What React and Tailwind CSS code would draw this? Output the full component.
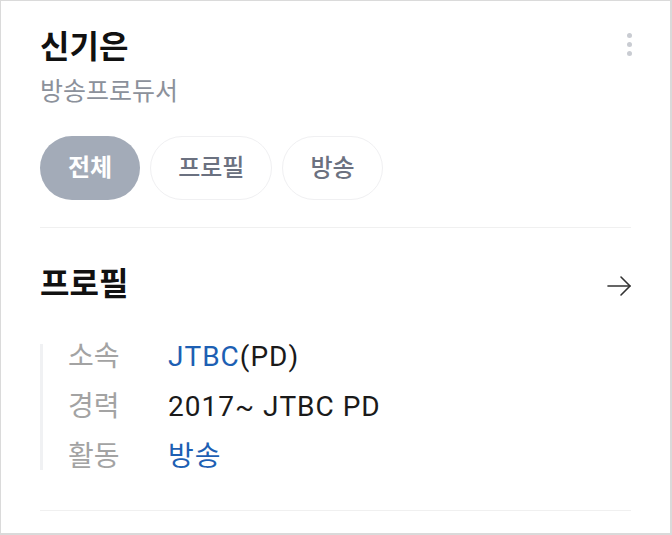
import React from "react";

const rows = [
  { label: "소속", value: (<><span className="text-[#1d5fb3]">JTBC</span>(PD)</>) },
  { label: "경력", value: "2017~ JTBC PD" },
  { label: "활동", value: <span className="text-[#1d5fb3]">방송</span> },
];

const tabs = [
  { name: "전체", active: true },
  { name: "프로필" },
  { name: "방송" },
];

export default function App() {
  return (
    <div
      className="w-[672px] h-[535px] bg-white border border-r-2 border-b-2 border-[#dadada] px-[39px] overflow-hidden"
      style={{ fontFamily: 'Roboto, "Noto Sans CJK KR", sans-serif' }}
    >
      {/* header */}
      <div className="flex justify-between pt-[26px]">
        <div>
          <h1 className="text-[32px] leading-[40px] font-bold text-[#111]">신기은</h1>
          <p className="mt-[9px] text-[25px] leading-[32px] text-[#8c919b]">방송프로듀서</p>
        </div>
        <div className="flex flex-col gap-[4px] pt-[6px] -mr-[1px]">
          <span className="w-[5px] h-[5px] rounded-full bg-[#c9ccd2]" />
          <span className="w-[5px] h-[5px] rounded-full bg-[#c9ccd2]" />
          <span className="w-[5px] h-[5px] rounded-full bg-[#c9ccd2]" />
        </div>
      </div>

      {/* tabs */}
      <div className="flex gap-[10px] mt-[28px]">
        {tabs.map((t) =>
          t.active ? (
            <button key={t.name} className="h-[64px] px-[28px] rounded-full bg-[#a3abb8] text-white text-[24px] font-bold">
              {t.name}
            </button>
          ) : (
            <button key={t.name} className="h-[64px] px-[27px] rounded-full border border-[#f0f0f2] bg-white text-[#6b7180] text-[24px] font-medium">
              {t.name}
            </button>
          )
        )}
      </div>

      <div className="mt-[27px] h-px bg-[#f0f0f0]" />

      {/* profile section */}
      <div className="flex items-center justify-between mt-[36px]">
        <h2 className="text-[32px] leading-[40px] font-bold text-[#111]">프로필</h2>
        <svg width="28" height="28" viewBox="0 0 28 28" fill="none" stroke="#333" strokeWidth="1.6" strokeLinecap="round" strokeLinejoin="round" className="-mr-[2px] mt-[4px]">
          <path d="M3 14h22" />
          <path d="M16 5l9 9-9 9" />
        </svg>
      </div>

      <div className="mt-[40px] border-l-[3px] border-[#f0f1f3] pl-[25px] flex flex-col gap-[24px]">
        {rows.map((r) => (
          <div key={r.label} className="flex text-[28px] leading-[26px]">
            <span className="w-[100px] text-[#a3a3a3]">{r.label}</span>
            <span className="text-[#1a1a1a] tracking-[1px]">{r.value}</span>
          </div>
        ))}
      </div>

      <div className="mt-[40px] h-px bg-[#f0f0f0]" />
    </div>
  );
}
